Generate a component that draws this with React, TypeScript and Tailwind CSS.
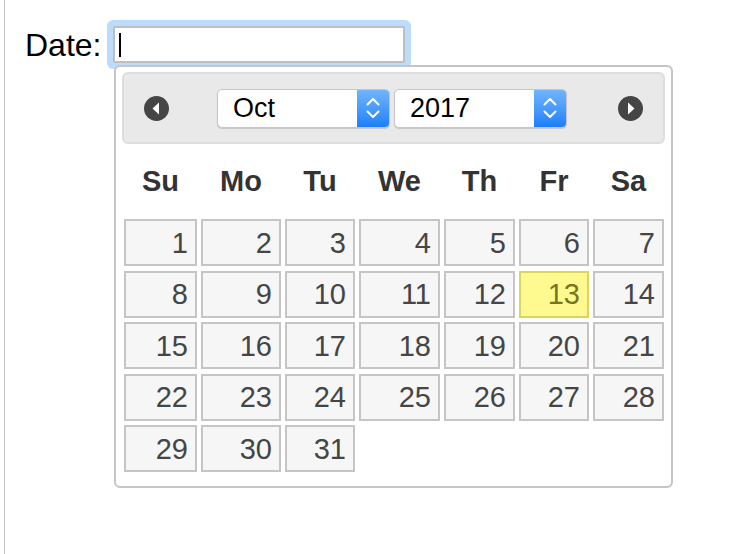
import React from "react";

const DAYS_OF_WEEK = ["Su", "Mo", "Tu", "We", "Th", "Fr", "Sa"];
// Oct 2017 starts on a Sunday, so no leading blanks
const DATES = Array.from({ length: 31 }, (_, i) => i + 1);
const TODAY = 13;

const COLS = "grid-cols-[73px_80px_70px_81px_71px_70px_71px]";

const NavIcon = ({ dir }: { dir: "prev" | "next" }) => (
  <svg width="25" height="25" viewBox="0 0 25 25" className="shrink-0">
    <circle cx="12.5" cy="12.5" r="12.5" fill="#454545" />
    {dir === "prev" ? (
      <polygon points="8.5,12.5 15,6.5 15,18.5" fill="#fff" />
    ) : (
      <polygon points="16.5,12.5 10,6.5 10,18.5" fill="#fff" />
    )}
  </svg>
);

const Select = ({ value, className = "" }: { value: string; className?: string }) => (
  <div
    className={`flex h-[39px] w-[173px] overflow-hidden rounded-[5px] border border-[#c6c6c6] bg-white shadow-[0_1px_1px_rgba(0,0,0,0.15)] ${className}`}
  >
    <span className="flex-1 pl-[15px] text-[27px] leading-[37px] text-black">{value}</span>
    <span className="flex w-[32px] items-center justify-center bg-linear-to-b from-[#70b5fb] to-[#1a7ffb]">
      <svg
        width="14"
        height="24"
        viewBox="0 0 14 24"
        fill="none"
        stroke="#fff"
        strokeWidth="2"
        strokeLinecap="round"
        strokeLinejoin="round"
      >
        <path d="M1.5 8.5 7 3l5.5 5.5" />
        <path d="M1.5 15.5 7 21l5.5-5.5" />
      </svg>
    </span>
  </div>
);

export default function App() {
  return (
    <div className="relative h-[554px] w-[756px] overflow-hidden bg-white font-['Liberation_Sans',Arial,sans-serif]">
      <div className="ml-[4px] h-full border-l border-[#c4c4c4]">
        <div className="flex items-center pl-[19px] pt-[26px]">
          <span className="w-[89px] pl-px text-[32px] leading-none text-black">Date:</span>
          <div className="flex h-[37px] w-[292px] items-center rounded-[2px] border-2 border-[#bfbfbf] bg-white shadow-[0_0_0_6px_#bddbfa]">
            <span className="ml-[4px] h-[24px] w-[2px] bg-black" />
          </div>
        </div>
      </div>

      {/* datepicker popup */}
      <div className="absolute left-[114px] top-[65px] w-[559px] rounded-[6px] border-2 border-[#c5c5c5] bg-white px-[6px] pb-[14px] pt-[5px]">
        <div className="flex h-[72px] items-center rounded-[6px] border-2 border-[#dddddd] bg-[#e9e9e9]">
          <span className="ml-[20px] flex">
            <NavIcon dir="prev" />
          </span>
          <Select value="Oct" className="ml-[48px]" />
          <Select value="2017" className="ml-[4px]" />
          <span className="ml-[51px] flex">
            <NavIcon dir="next" />
          </span>
        </div>

        <div className={`ml-[2px] grid h-[75px] items-center gap-x-[4px] ${COLS}`}>
          {DAYS_OF_WEEK.map((d) => (
            <span key={d} className="text-center text-[29px] font-bold leading-none text-[#333333]">
              {d}
            </span>
          ))}
        </div>

        <div className={`ml-[2px] grid auto-rows-[47px] gap-x-[4px] gap-y-[4.5px] ${COLS}`}>
          {DATES.map((n) => (
            <div
              key={n}
              className={`flex items-center justify-end border-2 pr-[7px] pt-px text-[29px] leading-none ${
                n === TODAY
                  ? "border-[#dad55e] bg-[#fffa90] text-[#777620]"
                  : "border-[#c5c5c5] bg-[#f6f6f6] text-[#454545]"
              }`}
            >
              {n}
            </div>
          ))}
        </div>
      </div>
    </div>
  );
}
